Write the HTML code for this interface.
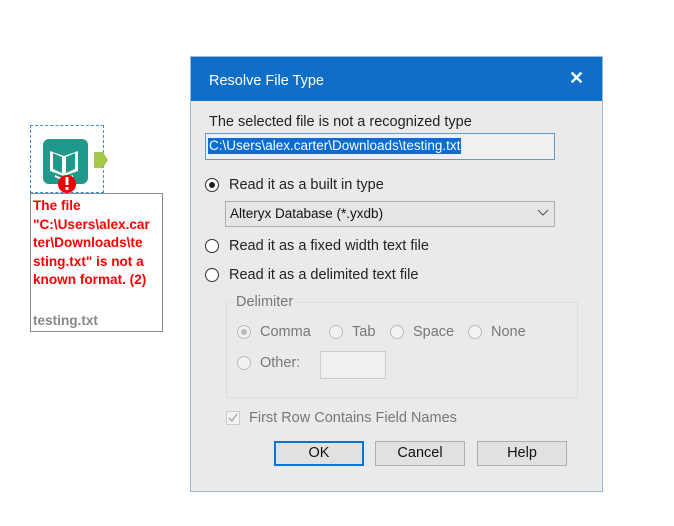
<!DOCTYPE html>
<html><head><style>
body{margin:0;width:674px;height:526px;background:#fff;position:relative;overflow:hidden;font-family:"Liberation Sans",sans-serif;}
.a{position:absolute}
.t{font-size:14.5px;color:#222;white-space:nowrap}
.g{color:#777}
.rad{position:absolute;width:14px;height:14px;border:1px solid #333;border-radius:50%;background:#fff;box-sizing:border-box}
.rd{border-color:#bbb;background:#f2f2f2}
.btn{position:absolute;width:90px;height:25px;border:1px solid #adadad;background:#e1e1e1;box-sizing:border-box;text-align:center;font-size:14.5px;line-height:23px;color:#111}
</style></head><body>
<!-- node -->
<div class="a" style="left:30px;top:125px;width:74px;height:68px;border:1px dashed #3a8fd8;box-sizing:border-box"></div>
<svg class="a" style="left:40px;top:136px" width="72" height="58">
<rect x="3" y="3" width="45" height="45" rx="6" fill="#1f9a8a"/>
<path d="M10 15 L24 20 L24 40 L10 35 Z M38 15 L24 20 L24 40 L38 35Z" fill="#fff"/>
<path d="M13 17 L22 21 L22 37 L13 33Z M35 17 L26 21 L26 37 L35 33Z" fill="#1f9a8a"/>
<path d="M15 40 L24 44 L33 40" stroke="#fff" stroke-width="2" fill="none"/>
<path d="M54 16 L63 16 L68 24 L63 32 L54 32Z" fill="#a8c84a"/>
<circle cx="27" cy="48" r="9" fill="#e00"/>
<rect x="25.5" y="41" width="3" height="8" fill="#fff"/><rect x="25.5" y="51" width="3" height="3" fill="#fff"/>
</svg>
<div class="a" style="left:30px;top:193px;width:133px;height:139px;border:1px solid #888;box-sizing:border-box;background:#fff"></div>
<div class="a" style="left:33px;top:197px;font-size:13.6px;font-weight:bold;color:#f00;line-height:18.5px;white-space:nowrap">The file<br>"C:\Users\alex.car<br>ter\Downloads\te<br>sting.txt" is not a<br>known format. (2)</div>
<div class="a" style="left:33px;top:313px;font-size:13.6px;font-weight:bold;color:#888">testing.txt</div>
<!-- dialog -->
<div class="a" style="left:190px;top:56px;width:413px;height:436px;border:1px solid #9ab8d8;box-sizing:border-box;background:#eaeaea"></div>
<div class="a" style="left:191px;top:57px;width:411px;height:44px;background:#0f6fc6"></div>
<div class="a" style="left:209px;top:73px;color:#fff;font-size:14.5px">Resolve File Type</div>
<div class="a" style="left:569px;top:68px;color:#fff;font-size:18px;font-weight:bold">✕</div>
<div class="a t" style="left:209px;top:114px">The selected file is not a recognized type</div>
<div class="a" style="left:205px;top:133px;width:350px;height:27px;border:1px solid #5a9bd8;box-sizing:border-box;background:#f0f0f0"></div>
<div class="a" style="left:208px;top:138px;background:#0b6cd6;color:#fff;font-size:13.5px;line-height:16px;padding:0 1px">C:\Users\alex.carter\Downloads\testing.txt</div>
<div class="rad" style="left:205px;top:178px"><div class="a" style="left:3px;top:3px;width:6px;height:6px;border-radius:50%;background:#222"></div></div>
<div class="a t" style="left:229px;top:177px">Read it as a built in type</div>
<div class="a" style="left:225px;top:201px;width:330px;height:26px;border:1px solid #adadad;box-sizing:border-box;background:#e5e5e5"></div>
<div class="a" style="left:230px;top:206px;font-size:13.5px;color:#111">Alteryx Database (*.yxdb)</div>
<svg class="a" style="left:537px;top:209px" width="12" height="8"><path d="M1 1 L6 6 L11 1" stroke="#555" fill="none"/></svg>
<div class="rad" style="left:205px;top:239px"></div>
<div class="a t" style="left:229px;top:238px">Read it as a fixed width text file</div>
<div class="rad" style="left:205px;top:268px"></div>
<div class="a t" style="left:229px;top:267px">Read it as a delimited text file</div>
<div class="a" style="left:226px;top:302px;width:352px;height:96px;border:1px solid #ddd;box-sizing:border-box"></div>
<div class="a t g" style="left:234px;top:294px;background:#eaeaea;padding:0 2px">Delimiter</div>
<div class="rad rd" style="left:237px;top:325px"><div class="a" style="left:3px;top:3px;width:6px;height:6px;border-radius:50%;background:#bbb"></div></div>
<div class="a t g" style="left:260px;top:324px">Comma</div>
<div class="rad rd" style="left:329px;top:325px"></div><div class="a t g" style="left:352px;top:324px">Tab</div>
<div class="rad rd" style="left:390px;top:325px"></div><div class="a t g" style="left:413px;top:324px">Space</div>
<div class="rad rd" style="left:468px;top:325px"></div><div class="a t g" style="left:491px;top:324px">None</div>
<div class="rad rd" style="left:237px;top:356px"></div><div class="a t g" style="left:260px;top:355px">Other:</div>
<div class="a" style="left:320px;top:351px;width:66px;height:28px;border:1px solid #ccc;box-sizing:border-box;background:#f0f0f0"></div>
<div class="a" style="left:226px;top:411px;width:14px;height:14px;border:1px solid #ccc;box-sizing:border-box;background:#f2f2f2"></div>
<svg class="a" style="left:227px;top:412px" width="12" height="12"><path d="M2 6 L5 9 L10 2" stroke="#aaa" stroke-width="1.5" fill="none"/></svg>
<div class="a t g" style="left:249px;top:410px">First Row Contains Field Names</div>
<div class="btn" style="left:274px;top:441px;border:2px solid #0a74d6;line-height:21px">OK</div>
<div class="btn" style="left:375px;top:441px">Cancel</div>
<div class="btn" style="left:477px;top:441px">Help</div>
</body></html>
